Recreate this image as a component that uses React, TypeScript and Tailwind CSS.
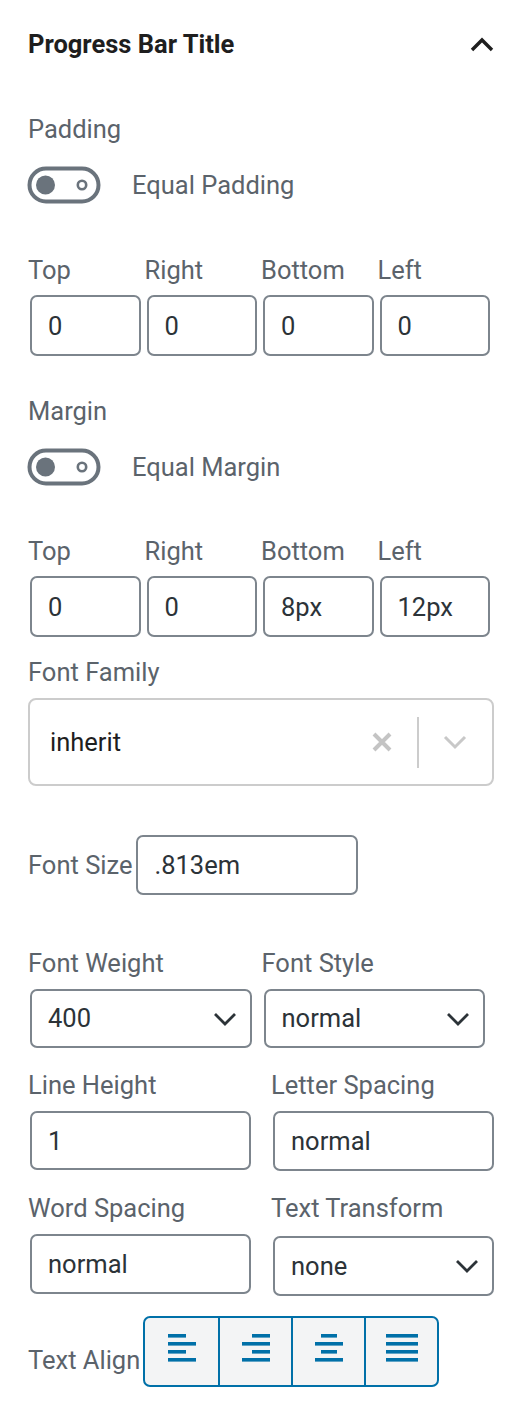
import { ReactNode } from 'react';

const FONT = "font-['Roboto','Liberation_Sans',sans-serif]";
const LABEL = 'block text-[25.5px] leading-[28px] text-[#5b636b] whitespace-nowrap';

function Toggle({ label }: { label: string }) {
  return (
    <div className="flex items-center h-[36px]">
      <svg width="74" height="38" viewBox="0 0 74 38" className="shrink-0 -ml-[1px]">
        <rect x="2.5" y="2.5" width="69" height="33" rx="16.5" fill="none" stroke="#6a737c" strokeWidth="4" />
        <circle cx="18.5" cy="19" r="9.5" fill="#6a737c" />
        <circle cx="55" cy="19" r="4.2" fill="none" stroke="#6a737c" strokeWidth="2.6" />
      </svg>
      <span className="ml-[31px] text-[25.5px] text-[#5b636b]">{label}</span>
    </div>
  );
}

function Field({ value, className = '' }: { value: string; className?: string }) {
  return (
    <input
      readOnly
      value={value}
      className={`min-w-0 border-2 border-[#7d858d] rounded-[7px] bg-white px-[16px] text-[25.5px] text-[#2c3338] outline-none ${className}`}
    />
  );
}

function Chevron({ color = '#2c3338', up = false, stroke = 2.8 }: { color?: string; up?: boolean; stroke?: number }) {
  return (
    <svg width="26" height="16" viewBox="0 0 26 16">
      <path
        d={up ? 'M3 13 L13 3 L23 13' : 'M3 3 L13 13 L23 3'}
        fill="none"
        stroke={color}
        strokeWidth={stroke}
      />
    </svg>
  );
}

function Select({ value, className = '' }: { value: string; className?: string }) {
  return (
    <div
      className={`flex items-center justify-between border-2 border-[#7d858d] rounded-[7px] bg-white pl-[16px] pr-[12px] text-[25.5px] text-[#2c3338] ${className}`}
    >
      <span>{value}</span>
      <Chevron />
    </div>
  );
}

function SideBox({ label, children }: { label: string; children: ReactNode }) {
  return (
    <div className="flex flex-col">
      <span className={`${LABEL} -ml-[2px]`}>{label}</span>
      <div className="mt-[12px]">{children}</div>
    </div>
  );
}

function FourSides({ values }: { values: string[] }) {
  const sides = ['Top', 'Right', 'Bottom', 'Left'];
  return (
    <div className="grid grid-cols-4 gap-x-[6px] w-[460px] ml-[2px]">
      {sides.map((s) => (
        <span key={s} className={`${LABEL} -ml-[2px]`}>{s}</span>
      ))}
      {values.map((v, i) => (
        <Field key={i} value={v} className="w-full h-[61px] mt-[11px]" />
      ))}
    </div>
  );
}

function AlignIcon({ kind }: { kind: 'left' | 'right' | 'center' | 'justify' }) {
  const long = kind === 'justify' ? 32 : 28;
  const short = kind === 'center' ? 16 : kind === 'justify' ? 32 : 18;
  const w = long;
  const xShort = kind === 'left' || kind === 'justify' ? 0 : kind === 'right' ? w - short : (w - short) / 2;
  return (
    <svg width={w} height="28" viewBox={`0 0 ${w} 28`}>
      <rect x={xShort} y="0" width={short} height="3.6" fill="#0070a8" />
      <rect x="0" y="8" width={long} height="3.6" fill="#0070a8" />
      <rect x={xShort} y="16" width={short} height="3.6" fill="#0070a8" />
      <rect x="0" y="24" width={long} height="3.6" fill="#0070a8" />
    </svg>
  );
}

export default function App() {
  return (
    <div className={`${FONT} w-[526px] min-h-[1406px] bg-white px-[28px] pt-[30px]`}>
      {/* Panel header */}
      <div className="flex items-center justify-between h-[28px]">
        <h2 className="text-[25.5px] leading-[28px] font-bold text-[#1e1e1e]">Progress Bar Title</h2>
        <div className="mr-[3px] mt-[1px]">
          <Chevron color="#1e1e1e" up stroke={3.4} />
        </div>
      </div>

      {/* Padding */}
      <span className={`${LABEL} mt-[57px]`}>Padding</span>
      <div className="mt-[24px]">
        <Toggle label="Equal Padding" />
      </div>
      <div className="mt-[53px]">
        <FourSides values={['0', '0', '0', '0']} />
      </div>

      {/* Margin */}
      <span className={`${LABEL} mt-[41px]`}>Margin</span>
      <div className="mt-[24px]">
        <Toggle label="Equal Margin" />
      </div>
      <div className="mt-[52px]">
        <FourSides values={['0', '0', '8px', '12px']} />
      </div>

      {/* Font family */}
      <span className={`${LABEL} mt-[21px]`}>Font Family</span>
      <div className="mt-[12px] flex items-center w-[466px] h-[88px] border-2 border-[#cccccc] rounded-[8px] pl-[20px] pr-[24px]">
        <span className="flex-1 text-[25.5px] text-[#1e1e1e]">inherit</span>
        <svg width="22" height="22" viewBox="0 0 22 22" className="mr-[24px]">
          <path d="M3 3 L19 19 M19 3 L3 19" stroke="#c4c4c4" strokeWidth="4" />
        </svg>
        <div className="w-[2px] h-[51px] bg-[#cccccc] mr-[23px]" />
        <Chevron color="#c8c8c8" stroke={3} />
      </div>

      {/* Font size */}
      <div className="mt-[49px] flex items-center">
        <span className={LABEL}>Font Size</span>
        <Field value=".813em" className="w-[222px] h-[60px] ml-[4px]" />
      </div>

      {/* Weight / style */}
      <div className="mt-[54px] grid grid-cols-2 gap-x-[12px] w-[455px] ml-[2px]">
        <SideBox label="Font Weight">
          <Select value="400" className="h-[59px]" />
        </SideBox>
        <SideBox label="Font Style">
          <Select value="normal" className="h-[59px]" />
        </SideBox>
      </div>

      {/* Line height / letter spacing */}
      <div className="mt-[23px] grid grid-cols-2 gap-x-[22px] w-[464px] ml-[2px]">
        <SideBox label="Line Height">
          <Field value="1" className="w-full h-[59px]" />
        </SideBox>
        <SideBox label="Letter Spacing">
          <Field value="normal" className="w-full h-[60px]" />
        </SideBox>
      </div>

      {/* Word spacing / transform */}
      <div className="mt-[23px] grid grid-cols-2 gap-x-[22px] w-[464px] ml-[2px]">
        <SideBox label="Word Spacing">
          <Field value="normal" className="w-full h-[60px]" />
        </SideBox>
        <div className="flex flex-col">
          <span className={`${LABEL} -ml-[2px]`}>Text Transform</span>
          <Select value="none" className="h-[60px] mt-[14px]" />
        </div>
      </div>

      {/* Text align */}
      <div className="mt-[20px] flex items-end">
        <span className={`${LABEL} mb-[13px]`}>Text Align</span>
        <div className="ml-[3px] flex h-[71px] border-2 border-[#0070a8] rounded-[7px] overflow-hidden bg-[#f3f4f5]">
          {(['left', 'right', 'center', 'justify'] as const).map((k, i) => (
            <div
              key={k}
              className={`w-[73px] flex items-center justify-center pb-[7px] ${i > 0 ? 'border-l-2 border-[#0070a8]' : ''}`}
            >
              <AlignIcon kind={k} />
            </div>
          ))}
        </div>
      </div>
    </div>
  );
}
